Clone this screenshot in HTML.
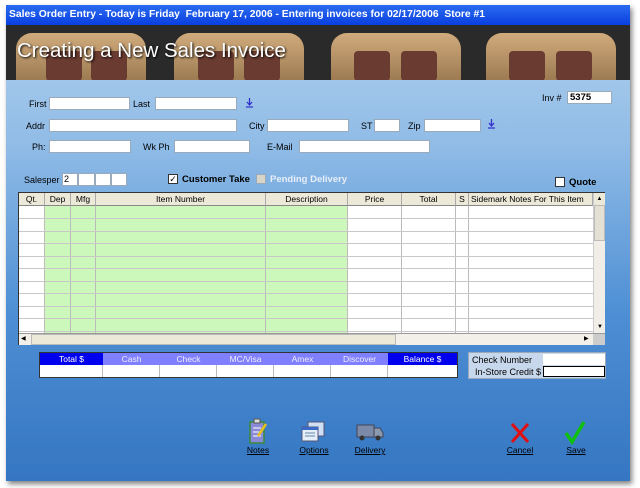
<!DOCTYPE html><html><head><style>
*{box-sizing:border-box;margin:0;padding:0}
body{width:640px;height:488px;background:#fff;position:relative;overflow:hidden;font-family:"Liberation Sans",sans-serif;font-size:9px;color:#000}
.win{position:absolute;left:6px;top:5px;width:624px;height:476px;box-shadow:2px 3px 5px rgba(0,0,0,.5);background:linear-gradient(#b4d2ee 0%,#8fbbe6 30%,#4d8ed4 65%,#3576c2 100%)}
.title{position:absolute;left:0;top:0;width:624px;height:20px;background:linear-gradient(#2a6cf0,#0a3fe0);color:#fff;font-weight:bold;font-size:10.3px;line-height:20px;padding-left:3px;white-space:nowrap}
.banner{position:absolute;left:0;top:20px;width:624px;height:55px;background:#2a2a2a;overflow:hidden}
.chair{position:absolute;top:8px;width:130px;height:50px;border-radius:16px 16px 4px 4px;background:linear-gradient(#d0ab7c,#9a7850)}
.pil{position:absolute;top:26px;width:36px;height:30px;background:#6a3b30;border-radius:4px}
.banner h1{position:absolute;left:11px;top:14px;color:#fff;font-size:20.5px;font-weight:normal;text-shadow:1px 1px 2px #000}
.l{position:absolute;font-size:9px}
.in{position:absolute;background:#fff;border:1px solid #9ab;height:13px}
.arr{position:absolute}
.grid{position:absolute;left:12px;top:187px;width:587px;height:153px;background:#fff;border:1px solid #333}
.gh{position:absolute;top:0;height:13px;background:#ece9d8;border-right:1px solid #aaa;border-bottom:1px solid #888;text-align:center;line-height:13px;font-size:8.5px}
.col{position:absolute;top:13px;height:128px;border-right:1px solid #bbb}
.row{position:absolute;left:0;width:574px;height:1px;background:#c8c8c8}
.pay{position:absolute;left:33px;top:347px;width:419px;height:26px;border:1px solid #333;background:#fff}
.ph{position:absolute;top:0;height:12px;color:#fff;text-align:center;line-height:12px;font-size:8.5px}
.pc{position:absolute;top:12px;height:12px;border-right:1px solid #bbb}
.btn{position:absolute;top:440px;width:40px;text-align:center;font-size:8.5px;text-decoration:underline}
</style></head><body>
<div class="win">
<div class="title">Sales Order Entry - Today is Friday&nbsp; February 17, 2006 - Entering invoices for 02/17/2006&nbsp; Store #1</div>
<div class="banner">
<div class="chair" style="left:10px"></div><div class="pil" style="left:40px"></div><div class="pil" style="left:85px"></div>
<div class="chair" style="left:168px"></div><div class="pil" style="left:192px"></div><div class="pil" style="left:238px"></div>
<div class="chair" style="left:325px"></div><div class="pil" style="left:348px"></div><div class="pil" style="left:395px"></div>
<div class="chair" style="left:480px"></div><div class="pil" style="left:503px"></div><div class="pil" style="left:550px"></div>
<h1>Creating a New Sales Invoice</h1>
</div>
<span class="l" style="left:23px;top:94px">First</span><div class="in" style="left:43px;top:92px;width:81px"></div>
<span class="l" style="left:127px;top:94px">Last</span><div class="in" style="left:149px;top:92px;width:82px"></div>
<svg class="arr" style="left:240px;top:93px" width="7" height="10"><path d="M3.5 0v6M1 4l2.5 3L6 4M0 9h7" stroke="#33c" fill="none" stroke-width="1.3"/></svg>
<span class="l" style="left:536px;top:88px">Inv #</span><div class="in" style="left:561px;top:86px;width:45px;font-weight:bold;font-size:9.5px;line-height:11px;padding-left:2px">5375</div>
<span class="l" style="left:20px;top:116px">Addr</span><div class="in" style="left:43px;top:114px;width:188px"></div>
<span class="l" style="left:243px;top:116px">City</span><div class="in" style="left:261px;top:114px;width:82px"></div>
<span class="l" style="left:355px;top:116px">ST</span><div class="in" style="left:368px;top:114px;width:26px"></div>
<span class="l" style="left:402px;top:116px">Zip</span><div class="in" style="left:418px;top:114px;width:57px"></div>
<svg class="arr" style="left:482px;top:114px" width="7" height="10"><path d="M3.5 0v6M1 4l2.5 3L6 4M0 9h7" stroke="#33c" fill="none" stroke-width="1.3"/></svg>
<span class="l" style="left:26px;top:137px">Ph:</span><div class="in" style="left:43px;top:135px;width:82px"></div>
<span class="l" style="left:137px;top:137px">Wk Ph</span><div class="in" style="left:168px;top:135px;width:76px"></div>
<span class="l" style="left:261px;top:137px">E-Mail</span><div class="in" style="left:293px;top:135px;width:131px"></div>
<span class="l" style="left:18px;top:170px">Salesper</span>
<div class="in" style="left:56px;top:168px;width:16px;line-height:11px;padding-left:1px">2</div><div class="in" style="left:72px;top:168px;width:17px"></div><div class="in" style="left:89px;top:168px;width:16px"></div><div class="in" style="left:105px;top:168px;width:16px"></div>
<div class="in" style="left:162px;top:169px;width:10px;height:10px;font-size:9px;line-height:8px;text-align:center;border-color:#333">✓</div>
<span class="l" style="left:176px;top:169px;font-weight:bold;font-size:9.5px">Customer Take</span>
<div class="in" style="left:250px;top:169px;width:10px;height:10px;background:#d8d4c8"></div>
<span class="l" style="left:264px;top:169px;font-weight:bold;font-size:9.5px;color:#e8eef6">Pending Delivery</span>
<div class="in" style="left:549px;top:172px;width:10px;height:10px;border-color:#333"></div>
<span class="l" style="left:563px;top:172px;font-weight:bold;font-size:9.5px">Quote</span>

<div class="grid">
<div class="col" style="left:25px;width:52px;background:#ccf8bc;border:none"></div>
<div class="col" style="left:77px;width:251px;background:#ccf8bc;border:none"></div>
<div class="col" style="left:0;width:26px"></div><div class="col" style="left:26px;width:26px"></div><div class="col" style="left:52px;width:25px"></div>
<div class="col" style="left:77px;width:170px"></div><div class="col" style="left:247px;width:82px"></div><div class="col" style="left:329px;width:54px"></div><div class="col" style="left:383px;width:54px"></div><div class="col" style="left:437px;width:13px"></div>
<div class="row" style="top:25px"></div><div class="row" style="top:38px"></div><div class="row" style="top:50px"></div><div class="row" style="top:63px"></div><div class="row" style="top:75px"></div><div class="row" style="top:88px"></div><div class="row" style="top:100px"></div><div class="row" style="top:113px"></div><div class="row" style="top:125px"></div><div class="row" style="top:138px"></div>
<div class="gh" style="left:0;width:26px">Qt.</div><div class="gh" style="left:26px;width:26px">Dep</div><div class="gh" style="left:52px;width:25px">Mfg</div><div class="gh" style="left:77px;width:170px">Item Number</div><div class="gh" style="left:247px;width:82px">Description</div><div class="gh" style="left:329px;width:54px">Price</div><div class="gh" style="left:383px;width:54px">Total</div><div class="gh" style="left:437px;width:13px">S</div><div class="gh" style="left:450px;width:124px;text-align:left;padding-left:2px">Sidemark Notes For This Item</div>
<div style="position:absolute;left:574px;top:0;width:12px;height:140px;background:#f0eee6;border-left:1px solid #ccc"><div style="height:12px;background:#ece9d8;font-size:6px;text-align:center;line-height:12px">▲</div><div style="height:36px;background:#e4e1d4;border:1px solid #bbb"></div><div style="position:absolute;bottom:0;width:12px;height:12px;font-size:6px;text-align:center;line-height:12px">▼</div></div>
<div style="position:absolute;left:0;top:140px;width:586px;height:12px;background:#f2f0e8;border-top:1px solid #999"><span style="position:absolute;left:2px;font-size:6px;line-height:11px">◀</span><div style="position:absolute;left:12px;top:0;width:365px;height:11px;background:#ece9d8;border:1px solid #bbb"></div><span style="position:absolute;left:565px;font-size:6px;line-height:11px">▶</span><div style="position:absolute;left:574px;width:12px;height:11px;background:#ccc"></div></div>
</div>

<div class="pay">
<div class="ph" style="left:0;width:63px;background:#0000ee">Total $</div>
<div class="ph" style="left:63px;width:286px;background:#8080ff;color:#eef"></div>
<div class="ph" style="left:63px;width:57px;background:#8080ff;color:#eef">Cash</div><div class="ph" style="left:120px;width:57px;background:#8080ff;color:#eef">Check</div><div class="ph" style="left:177px;width:57px;background:#8080ff;color:#eef">MC/Visa</div><div class="ph" style="left:234px;width:57px;background:#8080ff;color:#eef">Amex</div><div class="ph" style="left:291px;width:57px;background:#8080ff;color:#eef">Discover</div>
<div class="ph" style="left:348px;width:69px;background:#0000ee">Balance $</div>
<div class="pc" style="left:0;width:63px"></div><div class="pc" style="left:63px;width:57px"></div><div class="pc" style="left:120px;width:57px"></div><div class="pc" style="left:177px;width:57px"></div><div class="pc" style="left:234px;width:57px"></div><div class="pc" style="left:291px;width:57px"></div>
</div>
<div style="position:absolute;left:462px;top:347px;width:138px;height:27px;background:#c8d8ec;border:1px solid #9ab">
<span class="l" style="left:3px;top:2px">Check Number</span><div class="in" style="left:74px;top:1px;width:62px;height:11px;border-color:#fff"></div>
<span class="l" style="left:6px;top:14px">In-Store Credit $</span><div class="in" style="left:74px;top:13px;width:62px;height:11px;border-color:#000"></div>
</div>

<svg style="position:absolute;left:241px;top:413px" width="22" height="28"><rect x="3" y="4" width="14" height="21" fill="#8a8ad8" stroke="#3a8a3a" stroke-width="1.5"/><rect x="7" y="1" width="6" height="4" fill="#ddd" stroke="#555"/><path d="M6 10h8M6 14h8M6 18h8" stroke="#fff"/><path d="M19 6L11 18" stroke="#e8c020" stroke-width="2.5"/></svg>
<svg style="position:absolute;left:294px;top:416px" width="26" height="22"><rect x="8" y="1" width="16" height="14" fill="#cfe0f4" stroke="#557"/><rect x="2" y="6" width="16" height="14" fill="#e4eef8" stroke="#557"/><rect x="2" y="6" width="16" height="3" fill="#3a6ac8"/><path d="M5 12h10M5 15h10" stroke="#68a"/></svg>
<svg style="position:absolute;left:350px;top:418px" width="28" height="18"><rect x="1" y="2" width="17" height="12" fill="#7a8aa8" stroke="#445"/><path d="M18 5h6l3 5v4h-9z" fill="#8a98b0" stroke="#445"/><circle cx="6" cy="15" r="2.5" fill="#333"/><circle cx="22" cy="15" r="2.5" fill="#333"/></svg>
<svg style="position:absolute;left:503px;top:416px" width="22" height="24"><path d="M3 3L19 21M19 3L3 21" stroke="#e01010" stroke-width="3"/></svg>
<svg style="position:absolute;left:558px;top:415px" width="22" height="25"><path d="M2 13L8 22L20 2" stroke="#10c010" stroke-width="3.5" fill="none"/></svg>
<div class="btn" style="left:232px">Notes</div>
<div class="btn" style="left:288px">Options</div>
<div class="btn" style="left:344px">Delivery</div>
<div class="btn" style="left:494px">Cancel</div>
<div class="btn" style="left:550px">Save</div>
</div>
</body></html>
